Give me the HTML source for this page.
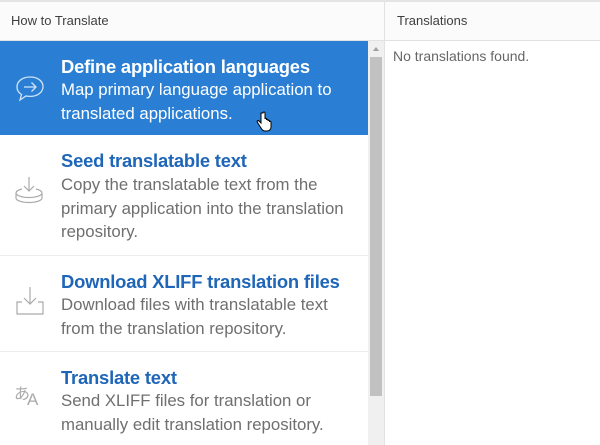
<!DOCTYPE html>
<html><head><meta charset="utf-8"><style>
*{margin:0;padding:0;box-sizing:border-box}
body{width:600px;height:445px;overflow:hidden;background:#fff;font-family:"Liberation Sans","Noto Sans CJK JP",sans-serif;position:relative}
.top{position:absolute;left:0;top:0;width:600px;height:2px;background:#e4e4e4}
.hdr{position:absolute;top:2px;height:39px;background:#fbfbfb;border-bottom:1px solid #e2e2e2;font-size:13px;color:#404040;line-height:38px}
.vdiv{position:absolute;left:384px;top:2px;width:1px;height:443px;background:#e2e2e2}
.item{position:absolute;left:0;width:368px;border-bottom:1px solid #ececec}
.t{position:absolute;left:61px;font-size:18.4px;font-weight:bold;color:#1f66b8;white-space:nowrap;letter-spacing:-0.2px}
.d{position:absolute;left:61px;font-size:16.8px;color:#6f6f6f;line-height:23.5px;white-space:nowrap}
.ic{position:absolute;left:14px}
.sel .t,.sel .d{color:#fff}
</style></head><body>
<div class="top"></div>
<div class="hdr" style="left:0;width:384px;padding-left:11px">How to Translate</div>
<div class="hdr" style="left:385px;width:215px;padding-left:12px">Translations</div>
<div class="vdiv"></div>
<div style="position:absolute;left:393px;top:48px;font-size:14px;color:#666">No translations found.</div>

<div class="item sel" style="top:41px;height:94px;background:#2a7fd4;border-bottom:none">
 <div class="t" style="top:15px">Define application languages</div>
 <div class="d" style="top:37px">Map primary language application to<br>translated applications.</div>
 <svg class="ic" style="top:34px" width="32" height="28" viewBox="0 0 32 28"><path d="M16 2C8 2 3 6.5 3 12c0 3.5 2 6 4.5 7.5L6 25l6-4c1.3.3 2.6.4 4 .4 8 0 13-4.5 13-9.8S24 2 16 2z" fill="none" stroke="#cfe3f7" stroke-width="1.3"/><path d="M10 12h12M17.5 7.5L22 12l-4.5 4.5" fill="none" stroke="#cfe3f7" stroke-width="1.3"/></svg>
 <svg style="position:absolute;left:256px;top:70px" width="16" height="22" viewBox="0 0 16 22"><path d="M5 2v10l-2-2c-1-1-2.5 0-1.5 1.5L5 17c1 2 2 3 4 3h2c2.5 0 4-2 4-4v-5c0-1-1.5-1-1.5 0v-1c0-1-1.5-1-1.5 0v-1c0-1-1.5-1-1.5 0V8c0-1-1.5-1-1.5 0V2c0-1.3-2-1.3-2 0z" fill="#fff" stroke="#000" stroke-width="1"/></svg>
</div>

<div class="item" style="top:135px;height:121px">
 <div class="t" style="top:15px">Seed translatable text</div>
 <div class="d" style="top:38px">Copy the translatable text from the<br>primary application into the translation<br>repository.</div>
 <svg class="ic" style="top:40px" width="32" height="32" viewBox="0 0 32 32"><path d="M15 2v14M10 11l5 5 5-5" fill="none" stroke="#aaa" stroke-width="1.2"/><path d="M8 14c-4 1-6 2.5-6 4v5c0 2.5 6 4.5 13 4.5s13-2 13-4.5v-5c0-1.5-2-3-6-4M2 18c0 2.5 6 4.5 13 4.5s13-2 13-4.5" fill="none" stroke="#aaa" stroke-width="1.2"/></svg>
</div>

<div class="item" style="top:256px;height:96px">
 <div class="t" style="top:15px">Download XLIFF translation files</div>
 <div class="d" style="top:37px">Download files with translatable text<br>from the translation repository.</div>
 <svg class="ic" style="top:28px" width="32" height="32" viewBox="0 0 32 32"><path d="M16 3v17M10 14l6 6 6-6" fill="none" stroke="#aaa" stroke-width="1.2"/><path d="M8 18H3v12h26V18h-5" fill="none" stroke="#aaa" stroke-width="1.2"/></svg>
</div>

<div class="item" style="top:352px;height:93px;border-bottom:none">
 <div class="t" style="top:15px">Translate text</div>
 <div class="d" style="top:37px">Send XLIFF files for translation or<br>manually edit translation repository.</div>
 <div style="position:absolute;left:14px;top:28px;font-size:16px;color:#aaa;font-family:'Noto Sans CJK JP',sans-serif">あ</div>
 <div style="position:absolute;left:27px;top:38px;font-size:17px;color:#aaa">A</div>
</div>

<div style="position:absolute;left:368px;top:41px;width:16px;height:404px;background:#f0f0f0"></div>
<div style="position:absolute;left:373px;top:47px;width:0;height:0;border-left:3px solid transparent;border-right:3px solid transparent;border-bottom:4px solid #a0a0a0"></div>
<div style="position:absolute;left:370px;top:57px;width:12px;height:339px;background:#c1c1c1"></div>
</body></html>
